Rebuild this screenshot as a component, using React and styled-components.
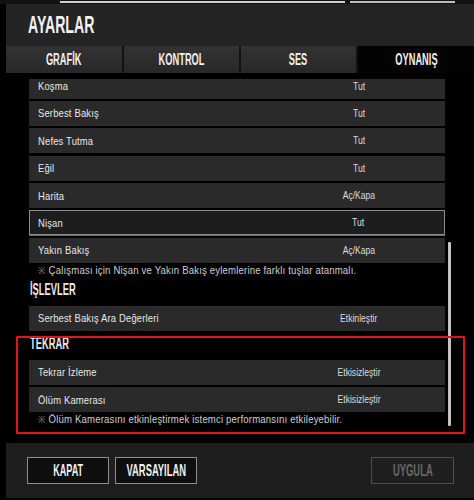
import React from "react";
import styled, { createGlobalStyle } from "styled-components";

const Global = createGlobalStyle`
  html, body { margin: 0; padding: 0; background: #000; }
  body { width: 474px; height: 500px; overflow: hidden; font-family: "Liberation Sans", Arial, sans-serif; }
  * { box-sizing: border-box; }
`;

const Page = styled.div`
  position: relative;
  width: 474px;
  height: 500px;
  background: #000;
`;

const TopStrip = styled.div`
  height: 4px;
  background:
    linear-gradient(to right,
      transparent 0 60px, #cfcfcf 60px 345px, transparent 345px 350px,
      #bdbdbd 350px 455px, transparent 455px),
    #121212;
  background-size: 100% 2px, 100% 100%;
  background-position: 0 1px, 0 0;
  background-repeat: no-repeat;
`;

const Panel = styled.div`
  margin-left: 6px;
  display: flex;
  flex-direction: column;
`;

const Header = styled.div`
  height: 42px;
  background: #242424;
  padding-left: 22px;
  display: flex;
  align-items: center;
`;

const Squeezed = styled.span`
  display: inline-block;
  white-space: nowrap;
  transform: scaleX(${(p) => p.$sx || 0.8});
  transform-origin: ${(p) => p.$origin || "center"};
`;

const Condensed = styled(Squeezed)`
  font-family: "Liberation Sans", Arial, sans-serif;
  font-weight: 700;
`;

const Title = styled(Condensed)`
  font-size: 23.5px;
  color: #f2f2f2;
`;

const Tabs = styled.div`
  display: grid;
  grid-template-columns: 116px 115px 115px 1fr;
  gap: 2px;
  height: 27px;
  background: #121212;
`;

const Tab = styled.div`
  display: flex;
  align-items: center;
  justify-content: center;
  background: ${(p) => (p.$active ? "#030303" : "linear-gradient(#333333, #282828)")};
  color: #f0f0f0;
`;

const TabText = styled(Condensed)`
  font-size: 16px;
`;

const Content = styled.div`
  position: relative;
  height: 370px;
  background: #000;
  padding-top: 6px;
`;

const Viewport = styled.div`
  height: 364px;
  overflow: hidden;
  padding: 0 29px 0 23px;
`;

const List = styled.div`
  margin-top: -5.5px;
  display: flex;
  flex-direction: column;
`;

const Row = styled.div`
  height: 25px;
  margin-bottom: ${(p) => (p.$last ? "0" : "2.4px")};
  display: grid;
  grid-template-columns: 1fr 172px;
  align-items: center;
  background: ${(p) => (p.$focused ? "#1d1d1d" : "#2a2a2a")};
  border: ${(p) => (p.$focused ? "1px solid #8c8c8c" : "none")};
  padding-left: ${(p) => (p.$focused ? "8px" : "9px")};
  box-shadow: ${(p) => (p.$focused ? "0 1px 0 #6a6a6a" : "none")};
`;

const Label = styled(Squeezed)`
  font-size: 11.5px;
  color: #e8e8e8;
  letter-spacing: 0.2px;
`;

const Value = styled(Squeezed)`
  font-size: 10px;
  color: #dcdcdc;
  justify-self: center;
`;

const Note = styled.div`
  height: 14px;
  display: flex;
  align-items: center;
  padding-left: 9px;
  color: #cfcfcf;
`;

const NoteText = styled(Squeezed)`
  font-size: 11px;
  letter-spacing: 0.2px;
`;

const Mark = styled.span`
  color: #8a8a8a;
  font-size: 10px;
  margin-right: 4px;
`;

const SectionHead = styled.div`
  height: 26px;
  margin-bottom: 3px;
  display: flex;
  align-items: center;
  padding-left: 1px;
  color: #e8e8e8;
`;

const HeadText = styled(Condensed)`
  font-size: 17px;
`;

const Scrollbar = styled.div`
  position: absolute;
  left: 442px;
  top: 169px;
  width: 3px;
  height: 184px;
  background: #c4c4c4;
  border-radius: 1px;
`;

const Highlight = styled.div`
  position: absolute;
  left: 10px;
  top: 263px;
  width: 449px;
  height: 98px;
  border: 2px solid #e0141b;
  border-radius: 1px;
  pointer-events: none;
`;

const Footer = styled.div`
  height: 55px;
  background: #1e1e1e;
  padding: 14px 20px 14px 21px;
  display: flex;
  align-items: stretch;
  gap: 6px;
`;

const Button = styled.div`
  width: ${(p) => p.$w || 82}px;
  height: 27px;
  display: flex;
  align-items: center;
  justify-content: center;
  background: ${(p) => (p.$disabled ? "#1f1f1f" : "#0f0f0f")};
  border: 1px solid ${(p) => (p.$disabled ? "#4f4f4f" : "#8e8e8e")};
  color: ${(p) => (p.$disabled ? "#686868" : "#f0f0f0")};
  margin-left: ${(p) => (p.$push ? "auto" : "0")};
`;

const ButtonText = styled(Condensed)`
  font-size: 16.5px;
`;

const controls = [
  ["Koşma", "Tut"],
  ["Serbest Bakış", "Tut"],
  ["Nefes Tutma", "Tut"],
  ["Eğil", "Tut"],
  ["Harita", "Aç/Kapa"],
  ["Nişan", "Tut", true],
  ["Yakın Bakış", "Aç/Kapa"],
];

const L = ({ children }) => <Label $origin="left" $sx={0.82}>{children}</Label>;
const V = ({ children }) => <Value $sx={0.86}>{children}</Value>;

export default function App() {
  return (
    <Page>
      <Global />
      <TopStrip />
      <Panel>
        <Header>
          <Title $origin="left" $sx={0.6}>AYARLAR</Title>
        </Header>
        <Tabs>
          <Tab><TabText $sx={0.58}>GRAFİK</TabText></Tab>
          <Tab><TabText $sx={0.58}>KONTROL</TabText></Tab>
          <Tab><TabText $sx={0.58}>SES</TabText></Tab>
          <Tab $active><TabText $sx={0.58}>OYNANIŞ</TabText></Tab>
        </Tabs>
        <Content>
          <Viewport>
            <List>
              {controls.map(([l, v, f], i) => (
                <Row key={l} $focused={f} $last={i === controls.length - 1}>
                  <L>{l}</L>
                  <V>{v}</V>
                </Row>
              ))}
              <Note>
                <NoteText $origin="left" $sx={0.87}>
                  <Mark>※</Mark>Çalışması için Nişan ve Yakın Bakış eylemlerine farklı tuşlar atanmalı.
                </NoteText>
              </Note>
              <SectionHead><HeadText $origin="left" $sx={0.55}>İŞLEVLER</HeadText></SectionHead>
              <Row $last>
                <L>Serbest Bakış Ara Değerleri</L>
                <V>Etkinleştir</V>
              </Row>
              <SectionHead><HeadText $origin="left" $sx={0.55}>TEKRAR</HeadText></SectionHead>
              <Row>
                <L>Tekrar İzleme</L>
                <V>Etkisizleştir</V>
              </Row>
              <Row $last>
                <L>Ölüm Kamerası</L>
                <V>Etkisizleştir</V>
              </Row>
              <Note>
                <NoteText $origin="left" $sx={0.87}>
                  <Mark>※</Mark>Ölüm Kamerasını etkinleştirmek istemci performansını etkileyebilir.
                </NoteText>
              </Note>
            </List>
          </Viewport>
          <Scrollbar />
          <Highlight />
        </Content>
        <Footer>
          <Button><ButtonText $sx={0.55}>KAPAT</ButtonText></Button>
          <Button><ButtonText $sx={0.57}>VARSAYILAN</ButtonText></Button>
          <Button $push $disabled $w={83}><ButtonText $sx={0.57}>UYGULA</ButtonText></Button>
        </Footer>
      </Panel>
    </Page>
  );
}
